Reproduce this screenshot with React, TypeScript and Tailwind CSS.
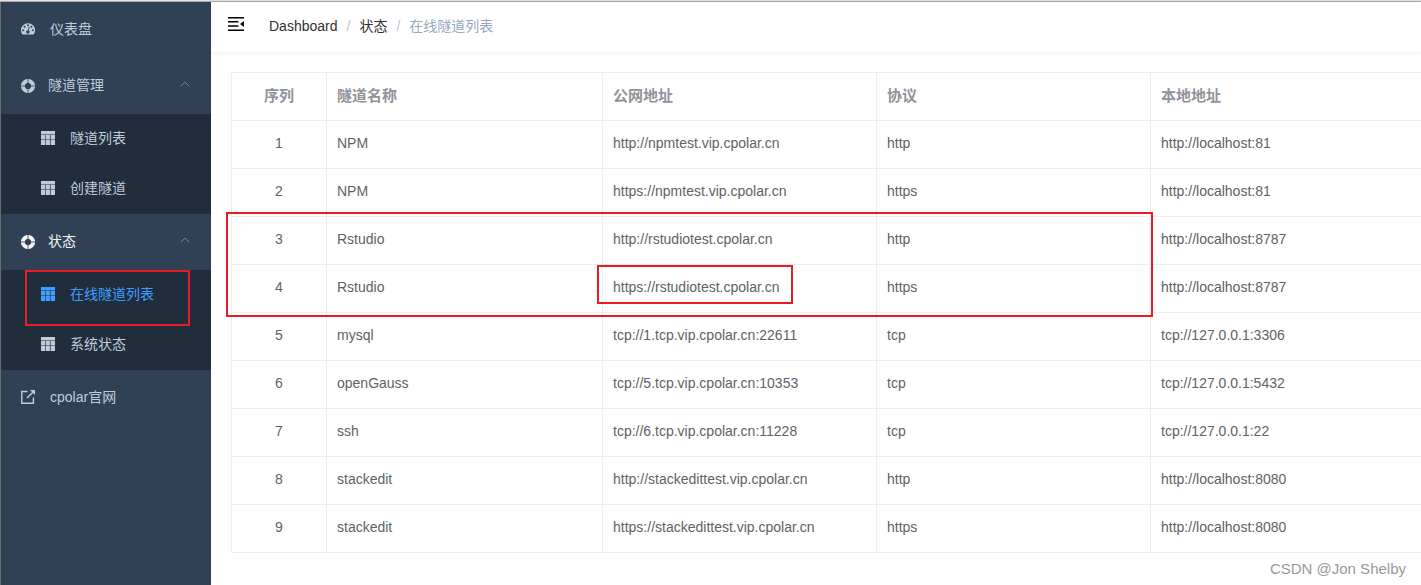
type IconProps = { className?: string }

const tunnels = [
  { name: "NPM", url: "http://npmtest.vip.cpolar.cn", protocol: "http", local: "http://localhost:81" },
  { name: "NPM", url: "https://npmtest.vip.cpolar.cn", protocol: "https", local: "http://localhost:81" },
  { name: "Rstudio", url: "http://rstudiotest.cpolar.cn", protocol: "http", local: "http://localhost:8787" },
  { name: "Rstudio", url: "https://rstudiotest.cpolar.cn", protocol: "https", local: "http://localhost:8787" },
  { name: "mysql", url: "tcp://1.tcp.vip.cpolar.cn:22611", protocol: "tcp", local: "tcp://127.0.0.1:3306" },
  { name: "openGauss", url: "tcp://5.tcp.vip.cpolar.cn:10353", protocol: "tcp", local: "tcp://127.0.0.1:5432" },
  { name: "ssh", url: "tcp://6.tcp.vip.cpolar.cn:11228", protocol: "tcp", local: "tcp://127.0.0.1:22" },
  { name: "stackedit", url: "http://stackedittest.vip.cpolar.cn", protocol: "http", local: "http://localhost:8080" },
  { name: "stackedit", url: "https://stackedittest.vip.cpolar.cn", protocol: "https", local: "http://localhost:8080" },
]

function DashboardIcon() {
  return (
    <svg viewBox="0 0 14 14" className="size-[14px] shrink-0" fill="currentColor" aria-hidden="true">
      <path
        fillRule="evenodd"
        d="M7 1.2a7 7 0 0 0-7 7c0 1.4.4 2.7 1.1 3.8.2.3.4.4.7.4h10.4c.3 0 .5-.1.7-.4A7 7 0 0 0 7 1.2ZM2.2 9.3a1 1 0 1 1 0-2 1 1 0 0 1 0 2Zm1.4-3.5a1 1 0 1 1 0-2 1 1 0 0 1 0 2ZM7 4.3a1 1 0 1 1 0-2 1 1 0 0 1 0 2Zm3.4 1.5a1 1 0 1 1 0-2 1 1 0 0 1 0 2Zm1.4 3.5a1 1 0 1 1 0-2 1 1 0 0 1 0 2ZM8.7 5.4 7.6 8.6a1.6 1.6 0 1 1-.9-.2l1.1-3.3c.2-.6 1.1-.3.9.3Z"
      />
    </svg>
  )
}

function RingIcon() {
  return (
    <svg viewBox="0 0 14 14" className="size-[14px] shrink-0" fill="none" stroke="currentColor" aria-hidden="true">
      <circle cx="7" cy="7" r="5.1" strokeWidth="4" />
      <path d="M7 3.6 10.4 7 7 10.4 3.6 7Z" fill="#304156" stroke="none" />
      <path d="M7 0v4M7 10v4M0 7h4M10 7h4" stroke="#304156" strokeOpacity="0.8" strokeWidth="1" />
    </svg>
  )
}

function TableIcon() {
  return (
    <svg viewBox="0 0 14 14" className="size-[14px] shrink-0" fill="currentColor" aria-hidden="true">
      <path d="M0 0h14v3.4H0zM0 3.9h4.2v4.7H0zM4.8 3.9h4.1v4.7H4.8zM9.6 3.9H14v4.7H9.6zM0 9h4.2v5H0zM4.8 9h4.1v5H4.8zM9.6 9H14v5H9.6z" />
    </svg>
  )
}

function LinkIcon() {
  return (
    <svg viewBox="0 0 14 14" className="size-[14px] shrink-0" fill="none" stroke="currentColor" strokeWidth="1.4" aria-hidden="true">
      <path d="M6.5 1.5H.8v11.7h11.6V7.5M6 8l6.6-6.6" />
      <path d="M9 0h5v5Z" fill="currentColor" stroke="none" />
    </svg>
  )
}

function ChevronIcon({ className }: IconProps) {
  return (
    <svg viewBox="0 0 10 6" className={className} fill="none" stroke="currentColor" aria-hidden="true">
      <path d="m.7 5.2 4.3-4 4.3 4" />
    </svg>
  )
}

function FoldIcon() {
  return (
    <svg viewBox="0 0 16 14" className="h-[14px] w-4" fill="currentColor" aria-hidden="true">
      <path d="M0 0h16v1.5H0zM0 4h10.4v1.6H0zM0 8.2h10.4v1.6H0zM0 12.4h16V14H0zM16 4v6l-4-3z" />
    </svg>
  )
}

function SubMenu({ title, active, children }: { title: string; active?: boolean; children: React.ReactNode }) {
  return (
    <li>
      <button
        type="button"
        aria-expanded="true"
        className={`flex h-14 w-full items-center px-5 ${active ? "text-[#f4f4f5]" : "text-[#bfcbd9]"}`}
      >
        <RingIcon />
        <span className="ml-[13px] pb-[2px]">{title}</span>
        <ChevronIcon className="mr-px mb-1 ml-auto h-[6px] w-[10px] text-[#7d8792]" />
      </button>
      <ul className="relative bg-[#1f2d3d]">{children}</ul>
    </li>
  )
}

function SubItem({ title, active }: { title: string; active?: boolean }) {
  return (
    <li>
      <a
        href="#"
        className={`flex h-[50px] items-center gap-[15px] pb-[2px] pl-10 ${active ? "text-[#409eff]" : "text-[#bfcbd9]"}`}
      >
        <TableIcon />
        {title}
      </a>
    </li>
  )
}

function Sidebar() {
  return (
    <nav className="w-[211px] shrink-0 border-l border-[#6b6b6b] bg-[#304156] text-[#bfcbd9]">
      <ul>
        <li>
          <a href="#" className="flex h-14 items-center gap-[15px] px-5 pb-[2px]">
            <DashboardIcon />
            仪表盘
          </a>
        </li>
        <SubMenu title="隧道管理">
          <SubItem title="隧道列表" />
          <SubItem title="创建隧道" />
        </SubMenu>
        <SubMenu title="状态" active>
          <SubItem title="在线隧道列表" active />
          <SubItem title="系统状态" />
          <li aria-hidden="true" className="pointer-events-none absolute top-0 left-6 h-14 w-[165px] border-2 border-[#ed1c24]" />
        </SubMenu>
        <li>
          <a href="#" className="flex h-14 items-center gap-[15px] px-5 pb-[2px]">
            <LinkIcon />
            cpolar官网
          </a>
        </li>
      </ul>
    </nav>
  )
}

function Navbar() {
  return (
    <header className="flex h-[50px] items-center px-4 shadow-[0_1px_4px_rgba(0,21,41,0.08)]">
      <button type="button" aria-label="Toggle sidebar" className="mr-6 px-px pb-[6px] text-black">
        <FoldIcon />
      </button>
      <nav className="flex pb-[2px] text-[#303133]">
        <a href="#">Dashboard</a>
        <span className="mx-[9px] text-[#c0c4cc]">/</span>
        <a href="#">状态</a>
        <span className="mx-[9px] text-[#c0c4cc]">/</span>
        <span className="text-[#97a8be]">在线隧道列表</span>
      </nav>
    </header>
  )
}

function TunnelTable() {
  const cell = "border-r border-b border-[#ebeef5] px-[10px] pt-[11px] pb-[13px]"
  const last = "border-b border-[#ebeef5] px-[10px] pt-[11px] pb-[13px]"
  return (
    <table className="w-full table-fixed border-separate border-spacing-0 border-t border-l border-[#ebeef5] text-left leading-[23px] text-[#606266]">
      <thead className="text-[15px] leading-[23px] text-[#909399]">
        <tr>
          <th className={`${cell} w-[95px] text-center`}>序列</th>
          <th className={`${cell} w-[276px]`}>隧道名称</th>
          <th className={`${cell} w-[274px]`}>公网地址</th>
          <th className={`${cell} w-[274px]`}>协议</th>
          <th className={last}>本地地址</th>
        </tr>
      </thead>
      <tbody>
        {tunnels.map((tunnel, index) => (
          <tr key={tunnel.url}>
            <td className={`${cell} text-center`}>{index + 1}</td>
            <td className={cell}>{tunnel.name}</td>
            <td className={cell}>{tunnel.url}</td>
            <td className={cell}>{tunnel.protocol}</td>
            <td className={last}>{tunnel.local}</td>
          </tr>
        ))}
      </tbody>
    </table>
  )
}

export default function App() {
  return (
    <div className="relative flex min-h-screen flex-col bg-white font-['Liberation_Sans','Noto_Sans_CJK_SC',sans-serif] text-sm">
      <div className="h-[2px] border-b border-[#ababab] bg-[#e4e2e0]" />
      <div className="flex flex-1">
        <Sidebar />
        <div className="min-w-0 flex-1">
          <Navbar />
          <main className="pt-5 pl-5">
            <div className="relative">
              <TunnelTable />
              <div className="pointer-events-none absolute top-[140px] -left-[5px] h-[105px] w-[927px] border-2 border-[#ed1c24]" />
              <div className="pointer-events-none absolute top-[193px] left-[366px] h-[39px] w-[196px] border-2 border-[#ed1c24]" />
            </div>
          </main>
        </div>
      </div>
      <div className="absolute right-[15px] bottom-[6px] text-[15px] text-[#999]">CSDN @Jon Shelby</div>
    </div>
  )
}
